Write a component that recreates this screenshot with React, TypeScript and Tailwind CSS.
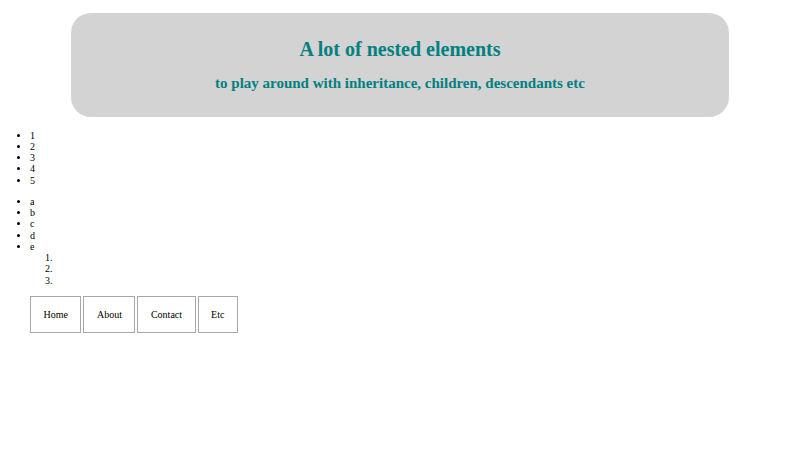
const numbers = ['1', '2', '3', '4', '5'];
const letters = ['a', 'b', 'c', 'd'];
const links = ['Home', 'About', 'Contact', 'Etc'];

const App = (): JSX.Element => {
  return (
    <div className="min-h-[450px] bg-white p-[5px] font-['Liberation_Serif',serif] text-[10px] leading-[11.25px] text-black">
      {/* Header */}
      <div className="mx-[66px] mt-[8px] flex flex-col items-center rounded-[20px] bg-[#d3d3d3] pb-[25.5px] pt-[24.5px] font-bold text-[#008080]">
        <h1 className="text-[20px] leading-[23px]">A lot of nested elements</h1>
        <h2 className="mt-[14px] text-[15px] leading-[17px]">
          to play around with inheritance, children, descendants etc
        </h2>
      </div>

      {/* Lists */}
      <ul className="mb-[10px] mt-[12.5px] list-disc pl-[25px]">
        {numbers.map((n) => (
          <li key={n}>{n}</li>
        ))}
      </ul>
      <ul className="my-[10px] list-disc pl-[25px]">
        {letters.map((l) => (
          <li key={l}>{l}</li>
        ))}
        <li>
          e
          <ol className="list-decimal pl-[25px]">
            <li></li>
            <li></li>
            <li></li>
          </ol>
        </li>
      </ul>

      {/* Nav */}
      <ul className="my-[10px] flex gap-[2px] pl-[25px]">
        {links.map((label) => (
          <li key={label} className="border border-[#a8a8a8] px-[12.5px] py-[12px]">
            {label}
          </li>
        ))}
      </ul>
    </div>
  );
};

export default App;
